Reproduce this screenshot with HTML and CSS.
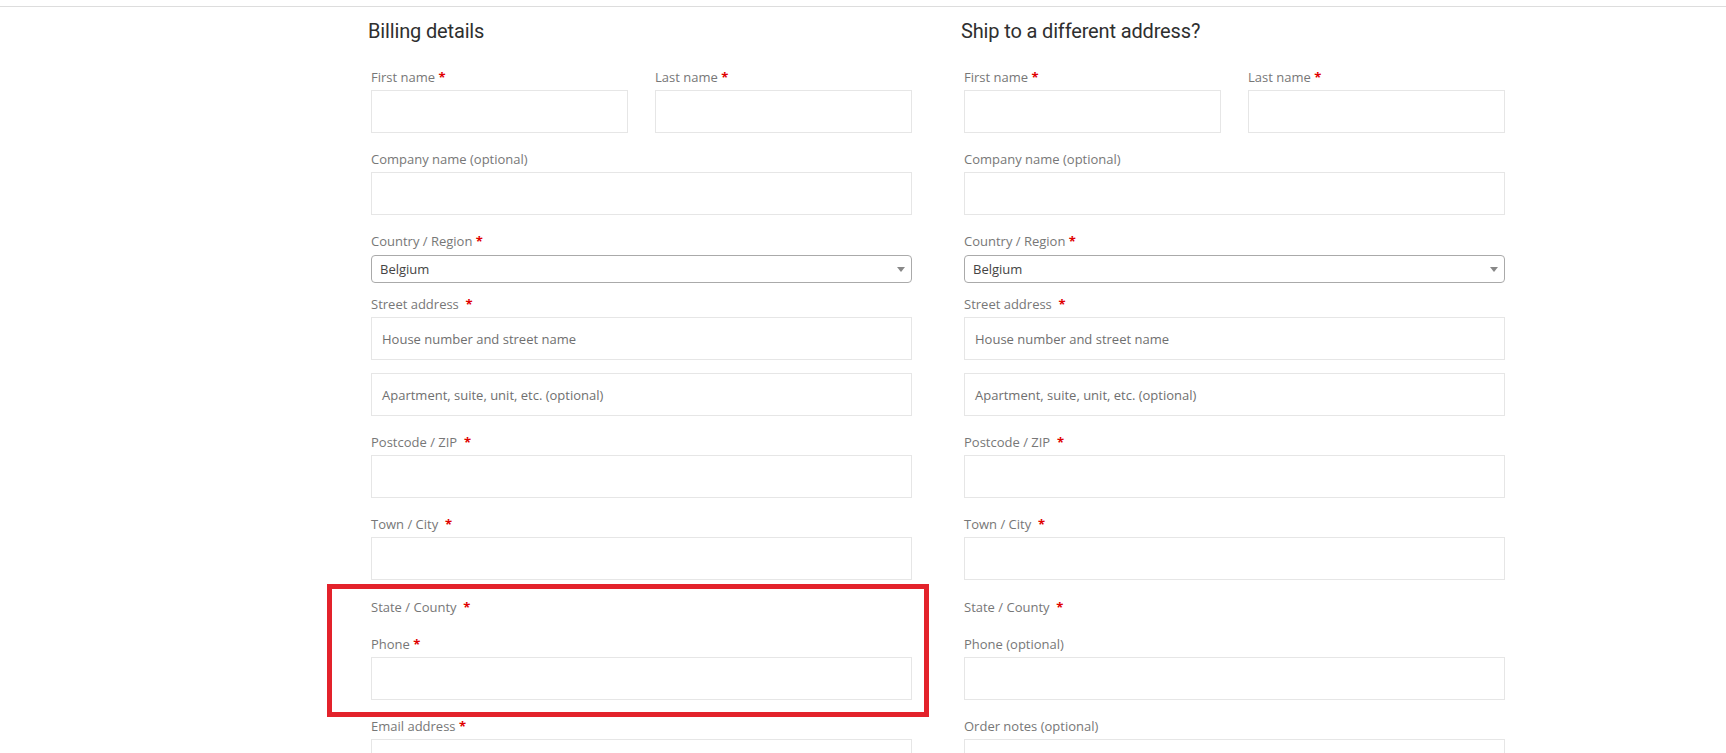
FILE: index.html
```html
<!DOCTYPE html>
<html lang="en">
<head>
<meta charset="utf-8">
<title>Checkout</title>
<link rel="stylesheet" href="styles.css">
</head>
<body>
<div class="topbar"></div>
<div class="checkout">
  <section class="col">
    <h3 class="col-title">Billing details</h3>
    <div class="fields">
      <div class="row-2">
        <div class="field">
          <label class="lbl">First name <abbr class="req">*</abbr></label>
          <div class="input"></div>
        </div>
        <div class="field">
          <label class="lbl">Last name <abbr class="req">*</abbr></label>
          <div class="input"></div>
        </div>
      </div>
      <div class="field">
        <label class="lbl">Company name (optional)</label>
        <div class="input"></div>
      </div>
      <div class="field field-select">
        <label class="lbl lbl-select">Country / Region <abbr class="req">*</abbr></label>
        <div class="select"><span class="select-val">Belgium</span><span class="select-arrow"></span></div>
      </div>
      <div class="field">
        <label class="lbl">Street address &nbsp;<abbr class="req">*</abbr></label>
        <div class="input"><span class="ph">House number and street name</span></div>
        <div class="input input-second"><span class="ph">Apartment, suite, unit, etc. (optional)</span></div>
      </div>
      <div class="field">
        <label class="lbl">Postcode / ZIP &nbsp;<abbr class="req">*</abbr></label>
        <div class="input"></div>
      </div>
      <div class="field field-town">
        <label class="lbl">Town / City &nbsp;<abbr class="req">*</abbr></label>
        <div class="input"></div>
      </div>
      <div class="highlight-group">
        <div class="field field-state">
          <label class="lbl">State / County &nbsp;<abbr class="req">*</abbr></label>
        </div>
        <div class="field field-last">
          <label class="lbl">Phone <abbr class="req">*</abbr></label>
          <div class="input"></div>
        </div>
        <div class="highlight"></div>
      </div>
      <div class="field">
        <label class="lbl">Email address <abbr class="req">*</abbr></label>
        <div class="input"></div>
      </div>
    </div>
  </section>

  <section class="col">
    <h3 class="col-title">Ship to a different address?</h3>
    <div class="fields">
      <div class="row-2">
        <div class="field">
          <label class="lbl">First name <abbr class="req">*</abbr></label>
          <div class="input"></div>
        </div>
        <div class="field">
          <label class="lbl">Last name <abbr class="req">*</abbr></label>
          <div class="input"></div>
        </div>
      </div>
      <div class="field">
        <label class="lbl">Company name (optional)</label>
        <div class="input"></div>
      </div>
      <div class="field field-select">
        <label class="lbl lbl-select">Country / Region <abbr class="req">*</abbr></label>
        <div class="select"><span class="select-val">Belgium</span><span class="select-arrow"></span></div>
      </div>
      <div class="field">
        <label class="lbl">Street address &nbsp;<abbr class="req">*</abbr></label>
        <div class="input"><span class="ph">House number and street name</span></div>
        <div class="input input-second"><span class="ph">Apartment, suite, unit, etc. (optional)</span></div>
      </div>
      <div class="field">
        <label class="lbl">Postcode / ZIP &nbsp;<abbr class="req">*</abbr></label>
        <div class="input"></div>
      </div>
      <div class="field field-town">
        <label class="lbl">Town / City &nbsp;<abbr class="req">*</abbr></label>
        <div class="input"></div>
      </div>
      <div class="field field-state">
        <label class="lbl">State / County &nbsp;<abbr class="req">*</abbr></label>
      </div>
      <div class="field">
        <label class="lbl">Phone (optional)</label>
        <div class="input"></div>
      </div>
      <div class="field">
        <label class="lbl">Order notes (optional)</label>
        <div class="input input-tall"></div>
      </div>
    </div>
  </section>
</div>
</body>
</html>
```
FILE: styles.css
```css
html, body {
  margin: 0;
  padding: 0;
  background: #ffffff;
  height: 100%;
  overflow: hidden;
}

body {
  font-family: "Open Sans", "Liberation Sans", sans-serif;
  font-size: 13px;
  color: #777777;
}

.topbar {
  height: 6px;
  border-bottom: 1px solid #dddddd;
}

.checkout {
  display: grid;
  grid-template-columns: 546px 546px;
  column-gap: 47px;
  padding-left: 368px;
}

.col-title {
  margin: 10px 0 22px 0;
  font-family: Roboto, "Liberation Sans", sans-serif;
  font-weight: 400;
  font-size: 20px;
  line-height: 28px;
  letter-spacing: -0.15px;
  color: #2f2f2f;
}

.fields {
  padding: 0 2px 0 3px;
}

.row-2 {
  display: grid;
  grid-template-columns: 1fr 1fr;
  column-gap: 27px;
}

.field {
  margin-bottom: 16px;
}

.field-select {
  margin-bottom: 11px;
}

.field-town {
  margin-bottom: 17px;
}

.field-state {
  margin-bottom: 17px;
}

.lbl {
  display: block;
  line-height: 20px;
  margin-bottom: 3px;
  color: #777777;
  white-space: pre;
}

.lbl-select {
  margin-bottom: 4px;
}

.req {
  color: #e00000;
  font-weight: 700;
  text-decoration: none;
  border: 0;
}

.input {
  box-sizing: border-box;
  height: 43px;
  border: 1px solid #e6e6e6;
  background: #ffffff;
  padding: 0 10px;
  display: flex;
  align-items: center;
}

.input-second {
  margin-top: 13px;
}

.input-tall {
  height: 90px;
}

.ph {
  color: #6f6f6f;
}

.select {
  box-sizing: border-box;
  height: 28px;
  border: 1px solid #aaaaaa;
  border-radius: 4px;
  background: #ffffff;
  display: flex;
  align-items: center;
  justify-content: space-between;
  padding: 0 6px 0 8px;
}

.select-val {
  color: #444444;
}

.select-arrow {
  width: 0;
  height: 0;
  border-style: solid;
  border-width: 5px 4px 0 4px;
  border-color: #888888 transparent transparent transparent;
}

.highlight-group {
  position: relative;
  margin-bottom: 16px;
}

.field-last {
  margin-bottom: 0;
}

.highlight {
  position: absolute;
  top: -13px;
  left: -44px;
  right: -17px;
  bottom: -17px;
  border: 5px solid #e3222b;
  pointer-events: none;
}
```
